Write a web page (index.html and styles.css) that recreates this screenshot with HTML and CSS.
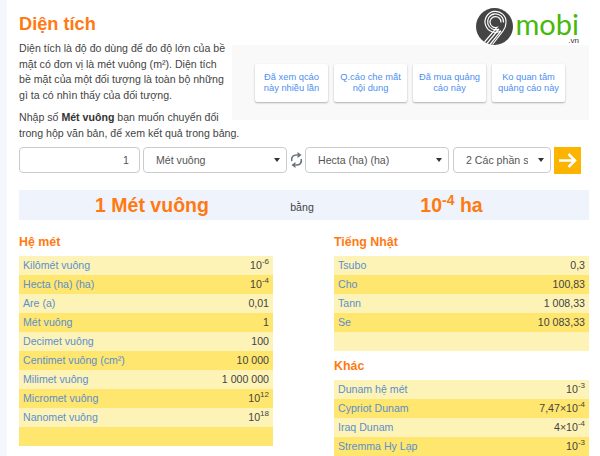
FILE: index.html
```html
<!DOCTYPE html>
<html lang="vi">
<head>
<meta charset="utf-8">
<title>Diện tích</title>
<link rel="stylesheet" href="styles.css">
</head>
<body>
<main class="page">
  <header class="head">
    <h1 class="title">Diện tích</h1>
    <div class="logo">
      <svg class="logo-mark" width="37" height="37" viewBox="0 0 37 37">
        <circle cx="18.5" cy="18.5" r="18.5" fill="#444"/>
        <g fill="none" stroke="#fff" stroke-width="1.200">
          <path d="M30 14.500 A10.500 10.500 0 1 0 25 22.800 L14 36.500"/>
          <path d="M27.500 14.500 A8 8 0 1 0 23 21 L11 35.500"/>
          <path d="M25 14.500 A5.500 5.500 0 1 0 21 19.400 L8.500 34"/>
          <path d="M30 14.500 C30 18 29 20.500 27 23 L16.500 36.500"/>
        </g>
      </svg>
      <div class="logo-word">
        <span class="logo-name">mobi</span>
        <span class="logo-tld">.vn</span>
      </div>
    </div>
  </header>

  <section class="intro">
    <div class="intro-text">
      <p>Diện tích là độ đo dùng để đo độ lớn của bề mặt có đơn vị là mét vuông (m²). Diện tích bề mặt của một đối tượng là toàn bộ những gì ta có nhìn thấy của đối tượng.</p>
      <p>Nhập số <b>Mét vuông</b> bạn muốn chuyển đổi trong hộp văn bản, để xem kết quả trong bảng.</p>
    </div>
    <div class="ad">
      <button class="ad-btn">Đã xem qcáo này nhiều lần</button>
      <button class="ad-btn">Q.cáo che mất nội dung</button>
      <button class="ad-btn">Đã mua quảng cáo này</button>
      <button class="ad-btn">Ko quan tâm quảng cáo này</button>
    </div>
  </section>

  <form class="convert">
    <input class="field field-num" type="text" value="1">
    <select class="field field-sel field-from"><option>Mét vuông</option></select>
    <svg class="swap" width="13" height="18" viewBox="0 0 13 18">
      <g fill="none" stroke="#66727f" stroke-width="1.600">
        <path d="M1.800 10 C0.800 6 3.500 3.500 7.500 4"/>
        <path d="M11.200 8 C12.200 12 9.500 14.500 5.500 14"/>
      </g>
      <path d="M7.500 1 L11.500 4 L7.500 7 Z M5.500 11 L1.500 14 L5.500 17 Z" fill="#66727f"/>
    </svg>
    <select class="field field-sel field-to"><option>Hecta (ha) (ha)</option></select>
    <select class="field field-sel field-prec"><option>2 Các phần số thập phân</option></select>
    <button class="go" type="button" aria-label="Chuyển đổi">
      <svg width="19" height="15" viewBox="0 0 19 15"><path d="M1 7.500 H17 M10.500 1 L17 7.500 L10.500 14" fill="none" stroke="#fff" stroke-width="2.500"/></svg>
    </button>
  </form>

  <section class="result">
    <div class="result-val">1 Mét vuông</div>
    <div class="result-eq">bằng</div>
    <div class="result-val">10<sup>-4</sup> ha</div>
  </section>

  <section class="tables">
    <div class="col">
      <h2 class="sub">Hệ mét</h2>
      <table class="tbl">
        <tr><td>Kilômét vuông</td><td>10<sup>-6</sup></td></tr>
        <tr><td>Hecta (ha) (ha)</td><td>10<sup>-4</sup></td></tr>
        <tr><td>Are (a)</td><td>0,01</td></tr>
        <tr><td>Mét vuông</td><td>1</td></tr>
        <tr><td>Decimet vuông</td><td>100</td></tr>
        <tr><td>Centimet vuông (cm²)</td><td>10 000</td></tr>
        <tr><td>Milimet vuông</td><td>1 000 000</td></tr>
        <tr><td>Micromet vuông</td><td>10<sup>12</sup></td></tr>
        <tr><td>Nanomet vuông</td><td>10<sup>18</sup></td></tr>
        <tr><td>&nbsp;</td><td></td></tr>
      </table>
    </div>
    <div class="col">
      <h2 class="sub">Tiếng Nhật</h2>
      <table class="tbl">
        <tr><td>Tsubo</td><td>0,3</td></tr>
        <tr><td>Cho</td><td>100,83</td></tr>
        <tr><td>Tann</td><td>1 008,33</td></tr>
        <tr><td>Se</td><td>10 083,33</td></tr>
        <tr><td>&nbsp;</td><td></td></tr>
      </table>
      <h2 class="sub sub-next">Khác</h2>
      <table class="tbl">
        <tr><td>Dunam hệ mét</td><td>10<sup>-3</sup></td></tr>
        <tr><td>Cypriot Dunam</td><td>7,47×10<sup>-4</sup></td></tr>
        <tr><td>Iraq Dunam</td><td>4×10<sup>-4</sup></td></tr>
        <tr><td>Stremma Hy Lạp</td><td>10<sup>-3</sup></td></tr>
      </table>
    </div>
  </section>
</main>
</body>
</html>
```
FILE: styles.css
```css
* { box-sizing: border-box; }
html, body { margin: 0; height: 456px; overflow: hidden; }
body { background: #f5f7fd; font-family: "Liberation Sans", Arial, sans-serif; color: #444; font-size: 10.600px; }
.page { margin-left: 7px; padding: 0 11px 0 12px; background: #fff; height: 456px; overflow: hidden; }

.head { display: flex; justify-content: space-between; align-items: flex-start; height: 41px; }
.title { margin: 13px 0 0; font-size: 18.200px; line-height: 22px; font-weight: bold; color: #ff7a10; }
.logo { display: flex; margin: 8px 10px 0 0; }
.logo-mark { display: block; }
.logo-word { display: flex; flex-direction: column; align-items: flex-end; margin-left: 3px; padding-top: 3px; }
.logo-name { font-family: Lato, sans-serif; font-size: 29px; line-height: 26px; color: #47b80c; }
.logo-tld { font-size: 8px; line-height: 8px; color: #333; }

.intro { display: flex; gap: 5px; height: 106px; }
.intro-text { width: 208px; flex: none; line-height: 15.500px; }
.intro-text p { margin: 0 0 7px; }
.intro-text p:last-child { margin: 0; width: 222px; }
.intro-text b { color: #333; }
.ad { flex: 1; height: 75px; margin-top: 4px; background: #f9f9f9; display: flex; gap: 6px; align-items: center; padding-left: 23px; }
.ad-btn { width: 73px; height: 38px; padding: 0 3px; border: 0; border-radius: 2px; background: #fff; box-shadow: 0 1px 2px rgba(0,0,0,.3); color: #4d8ff0; font: 9.300px/11px "Liberation Sans", Arial, sans-serif; text-align: center; }

.convert { display: flex; align-items: flex-start; height: 27px; }
.field { height: 26px; border: 1px solid #ccc; border-radius: 4px; background-color: #fff; color: #555; font: 10.600px "Liberation Sans", Arial, sans-serif; }
.field-sel { appearance: none; -webkit-appearance: none; padding: 0 18px 0 12px; background-image: url("data:image/svg+xml,%3Csvg xmlns='http://www.w3.org/2000/svg' width='6' height='4'%3E%3Cpath d='M0 0H6L3 4Z' fill='%23333'/%3E%3C/svg%3E"); background-repeat: no-repeat; background-position: right 6px center; }
.field-num { width: 121px; text-align: right; padding: 0 10px; }
.field-from { width: 144px; margin-left: 3px; }
.field-to { width: 144px; }
.field-prec { width: 98px; margin-left: 4px; padding-right: 22px; }
.swap { margin: 4px 2px 0 3px; flex: none; }
.go { width: 27px; height: 27px; margin-left: 3px; padding: 0; border: 0; background: #fdb400; display: flex; align-items: center; justify-content: center; }

.result { display: grid; grid-template-columns: 266px 34px 265px; margin-top: 16px; height: 30px; background: #eef3fc; align-items: center; text-align: center; }
.result-val { font-size: 19.500px; font-weight: bold; color: #ff7a10; line-height: 30px; }
.result-val sup { font-size: 14px; line-height: 0; }
.result-eq { font-size: 10.600px; padding-top: 3px; }

.tables { display: flex; justify-content: space-between; margin-top: 15px; }
.col { width: 254px; }
.col:last-child { width: 255px; }
.sub { margin: 0 0 7px; font-size: 12.400px; line-height: 14px; font-weight: bold; color: #ff7a10; }
.sub-next { margin: 8px 0 7px; }
.tbl { width: 100%; border-collapse: collapse; margin: 0; }
.tbl td { height: 19px; padding: 0 4px; font-size: 10.600px; line-height: 15px; white-space: nowrap; }
.tbl td:first-child { color: #5b8fd0; }
.tbl td:last-child { text-align: right; }
.tbl tr:nth-child(odd) { background: #fdf3b6; }
.tbl tr:nth-child(even) { background: #ffe66e; }
.tbl sup { font-size: 8px; line-height: 0; }
```
